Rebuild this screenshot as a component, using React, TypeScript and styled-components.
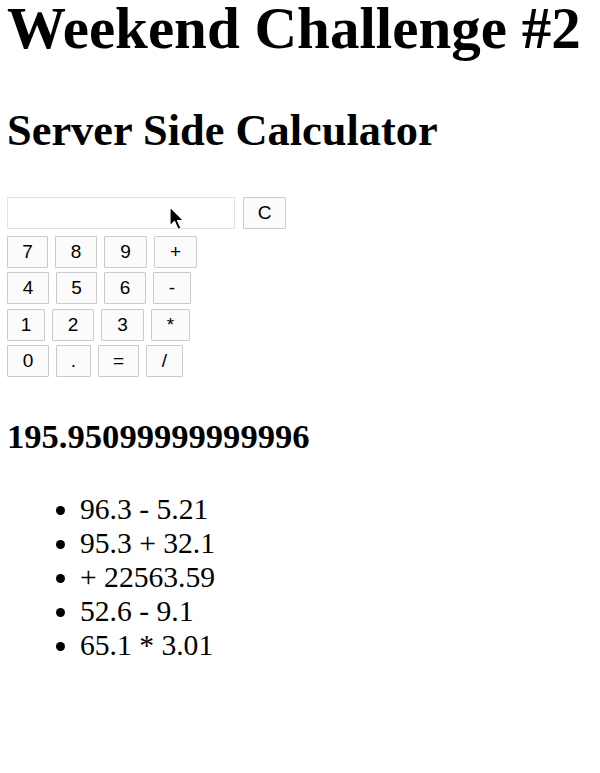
import * as React from 'react';
import styled, { createGlobalStyle } from 'styled-components';

const GlobalStyle = createGlobalStyle`
  html, body {
    margin: 0;
    padding: 0;
    background: #ffffff;
  }
  body {
    font-family: "Liberation Serif", "Times New Roman", serif;
    font-size: 29.6px;
    color: #000;
  }
`;

const Page = styled.div`
  padding: 0 7px;
`;

const Title = styled.h1`
  margin: 0;
  font-size: 59px;
  line-height: 57px;
  font-weight: bold;
  white-space: nowrap;
`;

const Subtitle = styled.h2`
  margin: 48px 0 41px;
  font-size: 44.4px;
  line-height: 51px;
  font-weight: bold;
`;

const Calculator = styled.div`
  position: relative;
  display: flex;
  flex-direction: column;
  gap: 4.5px;
`;

const InputRow = styled.div`
  display: flex;
  align-items: center;
  gap: 8px;
  margin-bottom: 2px;
`;

const Display = styled.input`
  box-sizing: border-box;
  width: 228px;
  height: 32px;
  border: 1px solid #e2e2e2;
  background: #fff;
  outline: none;
  padding: 0 6px;
  font-family: "Liberation Sans", Arial, sans-serif;
  font-size: 19px;
`;

const KeyRow = styled.div`
  display: flex;
  gap: 7px;
`;

const Key = styled.button<{ $w: number }>`
  box-sizing: border-box;
  width: ${(p) => p.$w}px;
  height: 32px;
  padding: 0;
  border: 1px solid #cbcbcb;
  border-radius: 1px;
  background: #fbfbfb;
  font-family: "Liberation Sans", Arial, sans-serif;
  font-size: 19px;
  color: #000;
  display: flex;
  align-items: center;
  justify-content: center;
`;

const Cursor = styled.svg`
  position: absolute;
  left: 161px;
  top: 9px;
  width: 18px;
  height: 26px;
`;

const Result = styled.h3`
  margin: 39px 0 0;
  font-size: 34.6px;
  line-height: 40px;
  font-weight: bold;
`;

const History = styled.ul`
  margin: 36px 0 0;
  padding-left: 73px;
  list-style: disc;
`;

const Entry = styled.li`
  line-height: 34px;
`;

const rows: [string, number][][] = [
  [['7', 41], ['8', 42], ['9', 43], ['+', 43]],
  [['4', 42], ['5', 41], ['6', 42], ['-', 38]],
  [['1', 38], ['2', 42], ['3', 43], ['*', 39]],
  [['0', 42], ['.', 35], ['=', 41], ['/', 37]],
];

const history = ['96.3 - 5.21', '95.3 + 32.1', '+ 22563.59', '52.6 - 9.1', '65.1 * 3.01'];

const App = () => {
  return (
    <Page>
      <GlobalStyle />
      <Title>Weekend Challenge #2</Title>
      <Subtitle>Server Side Calculator</Subtitle>
      <Calculator>
        <InputRow>
          <Display type="text" readOnly />
          <Key $w={43}>C</Key>
        </InputRow>
        {rows.map((row, i) => (
          <KeyRow key={i}>
            {row.map(([label, w]) => (
              <Key key={label} $w={w}>
                {label}
              </Key>
            ))}
          </KeyRow>
        ))}
        <Cursor viewBox="0 0 18 26">
          <path
            d="M2 1 L2 20 L6.5 15.5 L10 23.5 L13 22 L9.5 14.5 L15.5 14.5 Z"
            fill="#000"
            stroke="#fff"
            strokeWidth="1.2"
            strokeLinejoin="round"
          />
        </Cursor>
      </Calculator>
      <Result>195.95099999999996</Result>
      <History>
        {history.map((h) => (
          <Entry key={h}>{h}</Entry>
        ))}
      </History>
    </Page>
  );
};

export default App;
